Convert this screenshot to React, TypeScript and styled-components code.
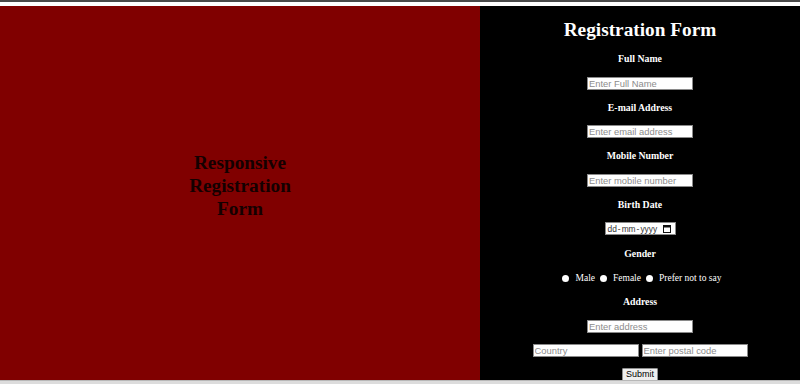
import React from "react";
import styled, { createGlobalStyle } from "styled-components";

const Global = createGlobalStyle`
  html, body { margin: 0; padding: 0; background: #ffffff; }
  body { font-family: "Liberation Serif", "Times New Roman", serif; }
  * { box-sizing: border-box; }
`;

const Frame = styled.div`
  width: 800px;
  height: 384px;
  display: flex;
  flex-direction: column;
  border-top: 2px solid #4a4a4a;
  padding-top: 4px;
  background: #ffffff;
  overflow: hidden;
`;

const Split = styled.main`
  flex: 1;
  display: grid;
  grid-template-columns: 480px 1fr;
  min-height: 0;
`;

const BottomBar = styled.div`
  height: 4px;
  background: #dcdcdc;
  border-top: 1px solid #b8b8b8;
`;

const Banner = styled.section`
  background: #800000;
  display: flex;
  align-items: center;
  justify-content: center;
  padding-bottom: 16px;
`;

const BannerTitle = styled.h1`
  margin: 0;
  max-width: 120px;
  text-align: center;
  font-size: 19.3px;
  line-height: 23px;
  font-weight: 700;
  color: #140000;
`;

const FormPanel = styled.section`
  background: #000000;
  color: #ffffff;
  padding-top: 12px;
  display: flex;
  flex-direction: column;
  align-items: center;
  gap: 11.3px;
`;

const FormTitle = styled.h2`
  margin: 0;
  font-size: 19.3px;
  line-height: 23px;
  font-weight: 700;
`;

const Label = styled.label`
  font-size: 9.8px;
  line-height: 13px;
  font-weight: 700;
  color: #ffffff;
`;

const TextInput = styled.input<{ $w?: number }>`
  width: ${(p) => p.$w ?? 106}px;
  height: 13px;
  padding: 0 1px;
  margin: 0;
  border: 1px solid #8a8a8a;
  border-radius: 0;
  background: #ffffff;
  font-family: "Liberation Sans", Arial, sans-serif;
  font-size: 9.4px;
  color: #222;
  outline: none;
  &::placeholder { color: #8c8c8c; }
`;

const DateBox = styled.div`
  width: 71px;
  height: 13px;
  border: 1px solid #8a8a8a;
  background: #ffffff;
  display: flex;
  align-items: center;
  justify-content: space-between;
  padding: 0 4px 0 2px;
  font-family: "Liberation Sans", Arial, sans-serif;
  font-size: 8.4px;
  color: #333;
`;

const DateText = styled.span`
  display: flex;
  gap: 1px;
`;

const RadioRow = styled.div`
  height: 13px;
  margin-top: 1px;
  margin-bottom: -1px;
  display: flex;
  align-items: center;
  gap: 5px;
  font-size: 9.5px;
  padding-left: 4px;
`;

const RadioOption = styled.label`
  display: flex;
  align-items: center;
  gap: 6px;
  color: #ffffff;
`;

const RadioDot = styled.input`
  appearance: none;
  width: 7px;
  height: 7px;
  margin: 0;
  border-radius: 50%;
  background: #ffffff;
  border: none;
`;

const PairRow = styled.div`
  display: flex;
  gap: 3px;
`;

const SubmitButton = styled.button`
  height: 13px;
  padding: 0 3px;
  margin: 0;
  border: 1px solid #8f8f8f;
  border-radius: 1px;
  background: #efefef;
  font-family: "Liberation Sans", Arial, sans-serif;
  font-size: 9px;
  line-height: 11px;
  color: #000;
`;

const CalendarIcon = () => (
  <svg width="8" height="8" viewBox="0 0 8 8" aria-hidden="true">
    <rect x="0.5" y="0.5" width="7" height="7" fill="none" stroke="#111" strokeWidth="1" />
    <rect x="0.5" y="0.5" width="7" height="2" fill="#111" />
  </svg>
);

export default function App() {
  return (
    <>
      <Global />
      <Frame>
        <Split>
          <Banner>
            <BannerTitle>Responsive Registration Form</BannerTitle>
          </Banner>
          <FormPanel>
            <FormTitle>Registration Form</FormTitle>
            <Label htmlFor="fn">Full Name</Label>
            <TextInput id="fn" placeholder="Enter Full Name" />
            <Label htmlFor="em">E-mail Address</Label>
            <TextInput id="em" placeholder="Enter email address" />
            <Label htmlFor="mb">Mobile Number</Label>
            <TextInput id="mb" placeholder="Enter mobile number" />
            <Label>Birth Date</Label>
            <DateBox>
              <DateText>
                <span>dd</span>-<span>mm</span>-<span>yyyy</span>
              </DateText>
              <CalendarIcon />
            </DateBox>
            <Label>Gender</Label>
            <RadioRow>
              <RadioOption>
                <RadioDot type="radio" name="g" />
                Male
              </RadioOption>
              <RadioOption>
                <RadioDot type="radio" name="g" />
                Female
              </RadioOption>
              <RadioOption>
                <RadioDot type="radio" name="g" />
                Prefer not to say
              </RadioOption>
            </RadioRow>
            <Label htmlFor="ad">Address</Label>
            <TextInput id="ad" placeholder="Enter address" />
            <PairRow>
              <TextInput placeholder="Country" />
              <TextInput placeholder="Enter postal code" />
            </PairRow>
            <SubmitButton type="button">Submit</SubmitButton>
          </FormPanel>
        </Split>
        <BottomBar />
      </Frame>
    </>
  );
}
